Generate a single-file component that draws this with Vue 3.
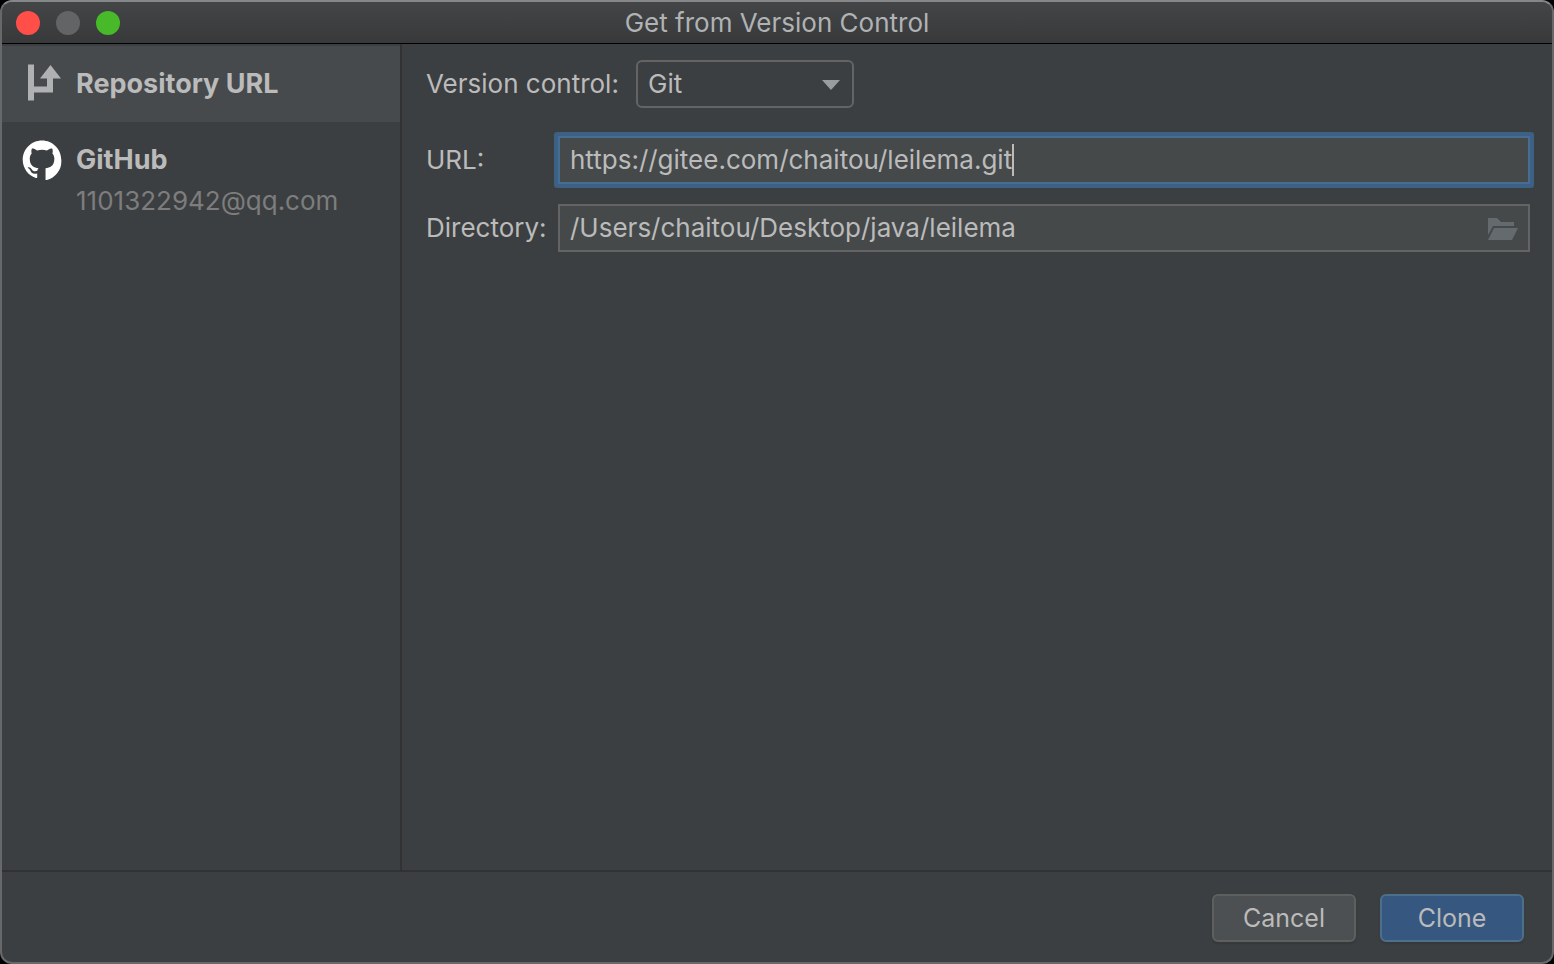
<template>
  <div class="window">
    <header class="titlebar">
      <div class="lights">
        <button type="button" class="light close" aria-label="Close"></button>
        <button type="button" class="light minimize" aria-label="Minimize" disabled></button>
        <button type="button" class="light zoom" aria-label="Zoom"></button>
      </div>
      <h1>Get from Version Control</h1>
    </header>

    <div class="body">
      <nav class="sidebar">
        <button type="button" class="source" :class="{ selected: source === 'url' }" @click="source = 'url'">
          <svg class="icon" viewBox="0 0 40 40" aria-hidden="true">
            <path fill="#afb1b3" d="M6 .5h6v22h13v-8h-7L28.500 1 39 14.500h-8v14H12v8H6z" />
          </svg>
          <span class="name">Repository URL</span>
        </button>
        <button type="button" class="source" :class="{ selected: source === 'github' }" @click="source = 'github'">
          <svg class="icon" viewBox="-.3 -.2 16.600 16.600" aria-hidden="true">
            <path fill="#fff" d="M8 0C3.58 0 0 3.58 0 8c0 3.54 2.29 6.53 5.47 7.59.4.07.55-.17.55-.38 0-.19-.01-.82-.01-1.49-2.01.37-2.53-.49-2.69-.94-.09-.23-.48-.94-.82-1.13-.28-.15-.68-.52-.01-.53.63-.01 1.08.58 1.23.82.72 1.21 1.87.87 2.33.66.07-.52.28-.87.51-1.07-1.78-.2-3.64-.89-3.64-3.95 0-.87.31-1.59.82-2.15-.08-.2-.36-1.02.08-2.12 0 0 .67-.21 2.2.82.64-.18 1.32-.27 2-.27s1.36.09 2 .27c1.53-1.04 2.2-.82 2.2-.82.44 1.1.16 1.92.08 2.12.51.56.82 1.27.82 2.15 0 3.07-1.87 3.75-3.65 3.95v4.98A8.01 8.01 0 0 0 16 8c0-4.42-3.58-8-8-8z" />
          </svg>
          <span class="name">GitHub</span>
          <span class="account">1101322942@qq.com</span>
        </button>
      </nav>

      <form id="clone-form" class="form" @submit.prevent>
        <div class="vcs">
          <label for="vcs">Version control:</label>
          <div class="select">
            <select id="vcs" v-model="vcs">
              <option>Git</option>
              <option>Mercurial</option>
              <option>Subversion</option>
            </select>
            <svg class="arrow" viewBox="0 0 18 10" aria-hidden="true">
              <path fill="#9a9da0" d="M0 0h18L9 10z" />
            </svg>
          </div>
        </div>

        <div class="row">
          <label for="url">URL:</label>
          <div class="field focused">
            <input id="url" ref="urlInput" v-model="url" type="text" spellcheck="false" />
            <span class="caret" :style="{ left: caretLeft + 'px' }"></span>
          </div>
        </div>

        <div class="row">
          <label for="directory">Directory:</label>
          <div class="field">
            <input id="directory" v-model="directory" type="text" spellcheck="false" />
            <button type="button" class="browse" aria-label="Browse">
              <svg viewBox="0 0 30 24" aria-hidden="true">
                <path fill="#636b6f" d="M0 2h9l4 4h13v4H5L0 19z" />
                <path fill="#636b6f" d="M6 12h24l-6 12H0z" />
              </svg>
            </button>
          </div>
        </div>
      </form>
    </div>

    <footer class="footer">
      <button type="button" class="btn">Cancel</button>
      <button type="submit" form="clone-form" class="btn primary">Clone</button>
    </footer>
  </div>
</template>

<script setup>
import { ref, watch, onMounted } from 'vue'

const source = ref('url')
const vcs = ref('Git')
const url = ref('https://gitee.com/chaitou/leilema.git')
const directory = ref('/Users/chaitou/Desktop/java/leilema')

const urlInput = ref(null)
const caretLeft = ref(0)

// put the caret right after the typed text
const placeCaret = () => {
  const style = getComputedStyle(urlInput.value)
  const ctx = document.createElement('canvas').getContext('2d')
  ctx.font = `${style.fontWeight} ${style.fontSize} ${style.fontFamily}`
  caretLeft.value = Math.round(parseFloat(style.paddingLeft) + ctx.measureText(url.value).width)
}

onMounted(placeCaret)
watch(url, placeCaret)
</script>

<style>
body {
  background: #000;
}
</style>

<style scoped>
.window {
  display: flex;
  flex-direction: column;
  box-sizing: border-box;
  min-height: 100vh;
  border: 2px solid #66686a;
  border-top-color: #858789;
  border-radius: 12px;
  overflow: hidden;
  background: #3c3f41;
  color: #bbbbbb;
  font-family: Inter, "Liberation Sans", sans-serif;
  font-size: 26px;
  line-height: 34px;
}
button, input, select {
  font: inherit;
  color: inherit;
  margin: 0;
}
.titlebar {
  display: grid;
  grid-template-columns: 1fr auto 1fr;
  align-items: center;
  height: 41px;
  padding: 0 14px;
  background: linear-gradient(#434547, #37393b);
  border-bottom: 1px solid #000;
}
.titlebar h1 {
  margin: 0;
  font-size: 26px;
  font-weight: 400;
  color: #b0b2b4;
}
.lights {
  display: flex;
  gap: 16px;
}
.light {
  width: 24px;
  height: 24px;
  padding: 0;
  border: 0;
  border-radius: 50%;
}
.close { background: #ff4f48; }
.minimize { background: #636466; }
.zoom { background: #48b928; }

.body {
  flex: 1;
  display: flex;
}
.sidebar {
  flex: 0 0 398px;
  padding-top: 2px;
  border-right: 2px solid #323232;
}
.source {
  display: grid;
  grid-template-columns: 40px 1fr;
  column-gap: 14px;
  row-gap: 4px;
  align-items: center;
  width: 100%;
  padding: 18px 20px;
  border: 0;
  background: none;
  text-align: left;
}
.source.selected {
  background: #474a4c;
}
.icon {
  width: 40px;
  height: 40px;
}
.name {
  font-size: 27px;
  font-weight: 700;
}
.account {
  grid-column: 2;
  color: #7d7d7d;
}

.form {
  flex: 1;
  min-width: 0;
  padding: 16px 22px 16px 24px;
}
.vcs {
  display: flex;
  align-items: center;
  gap: 12px;
  margin-bottom: 28px;
}
.vcs label {
  flex: 0 0 198px;
}
.select {
  position: relative;
  width: 218px;
}
.select select {
  appearance: none;
  box-sizing: border-box;
  display: block;
  width: 100%;
  height: 48px;
  padding: 0 40px 0 10px;
  border: 2px solid #646464;
  border-radius: 6px;
  background: #3c3f41;
}
.arrow {
  position: absolute;
  top: 20px;
  right: 14px;
  width: 18px;
  height: 10px;
  pointer-events: none;
}
.row {
  display: flex;
  align-items: center;
  margin-bottom: 20px;
}
.row label {
  flex: 0 0 132px;
}
.field {
  position: relative;
  flex: 1;
  min-width: 0;
  display: flex;
  align-items: center;
  box-sizing: border-box;
  height: 48px;
  border: 2px solid #646464;
  background: #45494a;
}
.field.focused {
  border-color: #466d94;
  box-shadow: 0 0 0 4px #3d6185;
  border-radius: 1px;
}
.field input {
  flex: 1;
  min-width: 0;
  padding: 0 10px;
  border: 0;
  outline: 0;
  background: none;
}
#url {
  caret-color: transparent;
}
.caret {
  position: absolute;
  top: 6px;
  width: 2px;
  height: 32px;
  background: #bbbbbb;
}
.browse {
  display: flex;
  padding: 0 10px;
  border: 0;
  background: none;
}
.browse svg {
  width: 30px;
  height: 24px;
}

.footer {
  display: flex;
  justify-content: flex-end;
  gap: 24px;
  padding: 22px 28px 20px;
  border-top: 2px solid #323232;
}
.btn {
  box-sizing: border-box;
  width: 144px;
  height: 48px;
  padding: 0;
  border: 2px solid #5e6060;
  border-radius: 6px;
  background: #4c5052;
  box-shadow: 0 2px 2px #36383a;
  font-size: 25px;
}
.btn.primary {
  border-color: #4c708c;
  background: #365880;
}
</style>
